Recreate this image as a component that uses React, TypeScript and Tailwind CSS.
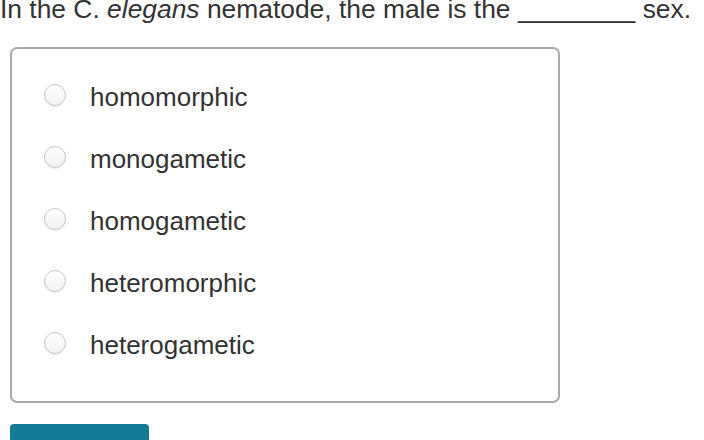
const options = [
  "homomorphic",
  "monogametic",
  "homogametic",
  "heteromorphic",
  "heterogametic",
];

export default function App() {
  return (
    <div
      className="w-[704px] h-[440px] overflow-hidden bg-white text-[#333]"
      style={{ fontFamily: '"Liberation Sans", Arial, sans-serif' }}
    >
      {/* Question */}
      <p className="mt-[-4px] mb-[25px] text-[26.4px] leading-none whitespace-nowrap">
        In the C. <em>elegans</em> nematode, the male is the ________ sex.
      </p>

      {/* Choices */}
      <div className="ml-[10px] w-[550px] border-2 border-[#aaa] rounded-[7px] pt-[17px] pb-[25px] pl-[32px]">
        {options.map((opt) => (
          <label key={opt} className="flex items-center h-[62px]">
            <span className="mb-1 w-[22px] h-[22px] rounded-full border border-[#c9c9c9] bg-linear-to-b from-white to-[#f1f1f1] shadow-[0_1px_1px_rgba(0,0,0,0.08)]" />
            <span className="ml-[24px] text-[26px] leading-none">{opt}</span>
          </label>
        ))}
      </div>

      {/* Submit */}
      <button className="block ml-[10px] mt-[21px] w-[139px] h-[32px] bg-[#157a96] rounded-[4px]" />
    </div>
  );
}
